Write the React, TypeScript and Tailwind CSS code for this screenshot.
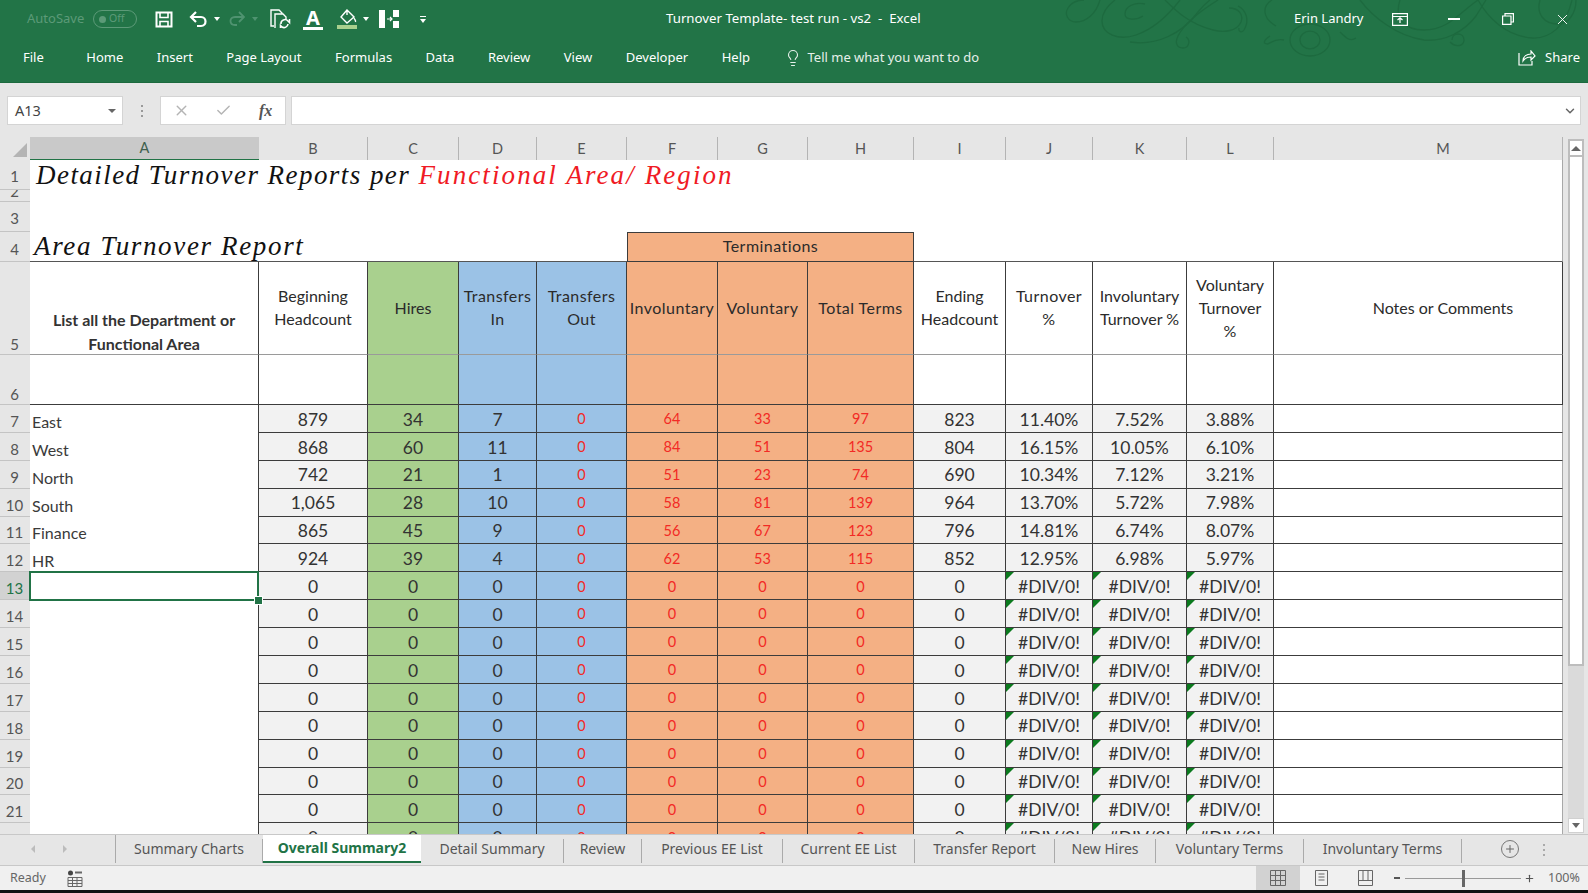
import { ChevronDown, Lightbulb, Plus, X, Check } from "lucide-react";

const cols = "grid grid-cols-[30px_229px_109px_91px_78px_90px_91px_90px_106px_92px_87px_94px_87px_289px]";
const sans = "[font-family:'Lato',sans-serif]";
const ui = "[font-family:'Noto_Sans',sans-serif]";
const script = "[font-family:'Liberation_Serif',serif] italic text-[27px] leading-none";
const line = "border-r border-b border-[#3c3c3c]";
const headerLine = "border-r border-b border-r-[#3c3c3c] border-b-[#9a9a9a]";

const colHeaders = ["A", "B", "C", "D", "E", "F", "G", "H", "I", "J", "K", "L", "M"];

const data = [
    ["7", "East", "879", "34", "7", "0", "64", "33", "97", "823", "11.40%", "7.52%", "3.88%"],
    ["8", "West", "868", "60", "11", "0", "84", "51", "135", "804", "16.15%", "10.05%", "6.10%"],
    ["9", "North", "742", "21", "1", "0", "51", "23", "74", "690", "10.34%", "7.12%", "3.21%"],
    ["10", "South", "1,065", "28", "10", "0", "58", "81", "139", "964", "13.70%", "5.72%", "7.98%"],
    ["11", "Finance", "865", "45", "9", "0", "56", "67", "123", "796", "14.81%", "6.74%", "8.07%"],
    ["12", "HR", "924", "39", "4", "0", "62", "53", "115", "852", "12.95%", "6.98%", "5.97%"],
];

const emptyRows = ["13", "14", "15", "16", "17", "18", "19", "20", "21", "22"];

const tabs = [
    { label: "Summary Charts", w: "w-[147px]" },
    { label: "Overall Summary2", w: "w-[158px]", active: true },
    { label: "Detail Summary", w: "w-[143px]" },
    { label: "Review", w: "w-[78px]" },
    { label: "Previous EE List", w: "w-[141px]" },
    { label: "Current EE List", w: "w-[132px]" },
    { label: "Transfer Report", w: "w-[140px]" },
    { label: "New Hires", w: "w-[101px]" },
    { label: "Voluntary Terms", w: "w-[148px]" },
    { label: "Involuntary Terms", w: "w-[158px]" },
];

function RowNum({ n, active, pad = "pb-[1px]" }: { n: string; active?: boolean; pad?: string }) {
    return (
        <div
            className={`flex items-end justify-center overflow-hidden border-b border-[#c4c4c4] pr-[1px] text-[15px] leading-[20px] ${pad} ${
                active ? "bg-[#d2d2d2] text-[#217346]" : "bg-[#e6e6e6] text-[#555]"
            }`}
        >
            {n}
        </div>
    );
}

function Num({ v, bg, red, error }: { v: string; bg: string; red?: boolean; error?: boolean }) {
    return (
        <div
            className={`relative flex items-center justify-center pt-[2px] leading-none ${line} ${bg} ${
                red ? "text-[14.5px] text-[#f22a25]" : "text-[17.5px] text-[#333]"
            }`}
        >
            {error && (
                <span className="absolute left-0 top-0 h-0 w-0 border-r-[8px] border-t-[8px] border-r-transparent border-t-[#0b7a1e]" />
            )}
            {v}
        </div>
    );
}

function DataRow({ cells, selected }: { cells: string[]; selected?: boolean }) {
    const error = cells[10] === "#DIV/0!";
    return (
        <div className={`${cols} h-[27.9px]`}>
            <RowNum n={cells[0]} active={selected} />
            <div className="relative flex items-end border-r border-[#3c3c3c] bg-white pb-[1px] pl-[2px] text-[16px] leading-[21px] text-[#3a3a3a]">
                {cells[1]}
                {selected && (
                    <div className="absolute -inset-x-[1px] -inset-y-[1px] z-10 border-2 border-[#217346]">
                        <span className="absolute -bottom-[5px] -right-[5px] h-[7px] w-[7px] bg-[#217346] outline outline-1 outline-white" />
                    </div>
                )}
            </div>
            <Num v={cells[2]} bg="bg-[#f2f2f2]" />
            <Num v={cells[3]} bg="bg-[#a9d08e]" />
            <Num v={cells[4]} bg="bg-[#9bc2e6]" />
            <Num v={cells[5]} bg="bg-[#9bc2e6]" red />
            <Num v={cells[6]} bg="bg-[#f4b084]" red />
            <Num v={cells[7]} bg="bg-[#f4b084]" red />
            <Num v={cells[8]} bg="bg-[#f4b084]" red />
            <Num v={cells[9]} bg="bg-[#f2f2f2]" />
            <Num v={cells[10]} bg="bg-[#f2f2f2]" error={error} />
            <Num v={cells[11]} bg="bg-[#f2f2f2]" error={error} />
            <Num v={cells[12]} bg="bg-[#f2f2f2]" error={error} />
            <div className="border-b border-r border-b-[#3c3c3c] border-r-[#a8a8a8] bg-white" />
        </div>
    );
}

function HeadCell({ bg, wide, children }: { bg: string; wide?: boolean; children?: React.ReactNode }) {
    return (
        <div
            className={`flex items-center justify-center pb-[2px] text-center text-[16px] leading-[23px] text-[#2b2b2b] ${headerLine} ${bg} ${
                wide ? "tracking-[0.45px]" : ""
            }`}
        >
            <div>{children}</div>
        </div>
    );
}

function BlankCell({ bg }: { bg: string }) {
    return <div className={`${line} ${bg}`} />;
}

function Swirls() {
    return (
        <svg className="pointer-events-none absolute right-0 top-0" width="540" height="70" viewBox="1048 0 540 70" fill="none" stroke="#1d6a3f" strokeWidth="1.3">
            <path d="M1100 0c-4 14-14 22-24 22-8 0-12-8-8-14 3-5 9-8 16-8" />
            <path d="M1115 0c-8 6-13 14-13 21 0 13 16 20 34 14 20-7 34-22 44-35" />
            <path d="M1145 4c-10-2-20 2-20 10 0 7 12 6 18 2" />
            <path d="M1130 42c26 4 52-8 68-30 4-5 8-9 12-12" />
            <path d="M1165 0c10 10 24 24 48 30 12 3 24 1 28-8 3-8-3-14-12-14" />
            <path d="M1218 0c-16 10-34 24-40 36-4 8 0 12 5 12 6 0 8-8 3-11" />
            <path d="M1238 6c8 4 12 14 6 24-2 3-6 2-5-2" />
            <path d="M1272 0c-10 6-10 18 4 26" />
            <path d="M1270 36c-6 4-8 8-2 8 4-2 8-6 16-4" />
            <path d="M1290 40a20 16 0 1 0 40 0a20 16 0 1 0-40 0" />
            <path d="M1300 40a9 8 0 1 0 20 0a9 8 0 1 0-20 0" />
            <path d="M1340 32c6 6 10 10 16 6" />
            <path d="M1360 0c12 16 36 36 64 40 20 2 40-8 52-24l10-16" />
            <path d="M1400 0c-6 18 4 30 24 30 24 0 34-16 54-30" />
            <path d="M1450 42c6 6 14 4 14-2 0-8-12-8-12 0" />
            <path d="M1478 0c10 18 28 36 54 38 18 1 34-12 40-38" />
            <path d="M1540 0c-4 14 4 24 18 24 10 0 18-10 18-24" />
        </svg>
    );
}

function QuickAccess() {
    return (
        <div className="flex w-[666px] items-center pl-[27px]">
            <span className="w-[66px] text-[13px] text-[#5c9a78]">AutoSave</span>
            <span className="flex h-[18px] w-[44px] items-center gap-[3px] rounded-full border border-[#5c9a78] pl-[5px] text-[10.5px] text-[#5c9a78]">
                <span className="h-[7px] w-[7px] rounded-full bg-[#5c9a78]" />
                Off
            </span>
            <svg className="ml-[18px]" width="18" height="17" viewBox="0 0 18 17" fill="none" stroke="white" strokeWidth="2">
                <path d="M1.5 1.5h15v14h-15z" />
                <path d="M5 1.5v5h8v-5M5 15.5v-5h8v5" strokeWidth="1.6" />
            </svg>
            <svg className="ml-[16px]" width="19" height="17" viewBox="0 0 19 17" fill="none" stroke="white" strokeWidth="2.2">
                <path d="M7 1 2 6l5 5" />
                <path d="M2.5 6H12c6 0 6 9 0 9H8" />
            </svg>
            <span className="ml-[6px] h-0 w-0 border-x-[3.5px] border-t-[4px] border-x-transparent border-t-white" />
            <svg className="ml-[8px]" width="17" height="16" viewBox="0 0 17 16" fill="none" stroke="#4f9370" strokeWidth="1.8">
                <path d="M11 1l5 5-5 5" />
                <path d="M15 6H7c-6 0-6 8 0 8h2" />
            </svg>
            <span className="ml-[7px] h-0 w-0 border-x-[3.5px] border-t-[4px] border-x-transparent border-t-[#4f9370]" />
            <svg className="ml-[12px]" width="21" height="20" viewBox="0 0 21 20" fill="none" stroke="white" strokeWidth="1.4">
                <path d="M4 17H1V1h8l3 3v1" />
                <path d="M5 19V5h8l3 3v2" />
                <path d="M11 15a4 4 0 0 1 7-3l1.500 1.500V10M18 15a4 4 0 0 1-6 3l-1.500-1.500V19" strokeWidth="1.600" />
            </svg>
            <span className="ml-[12px] flex w-[20px] flex-col items-center border-b-[3px] border-white text-[20px] font-bold leading-[19px] text-white">A</span>
            <span className="relative ml-[14px] flex h-[20px] w-[20px] flex-col items-center justify-start">
                <svg width="19" height="15" viewBox="0 0 19 15" fill="none" stroke="white" strokeWidth="1.400">
                    <path d="M9 1 3 8l6 6 7-6zM9 1v5" />
                    <path d="M16 9c1 2 2 3 1.500 4" />
                </svg>
                <span className="mt-[1px] h-[4px] w-[20px] bg-[#a9d08e]" />
            </span>
            <span className="ml-[6px] h-0 w-0 border-x-[3.5px] border-t-[4px] border-x-transparent border-t-white" />
            <svg className="ml-[10px]" width="20" height="18" viewBox="0 0 20 18" fill="white">
                <path d="M0 0h6v18H0zM14 0h6v7h-6zM14 11h6v7h-6z" />
                <path d="M8 9h5M11 7l2 2-2 2" stroke="white" fill="none" strokeWidth="1.200" />
            </svg>
            <span className="ml-[21px] flex flex-col items-center gap-[2px]">
                <span className="h-[1px] w-[6px] bg-white" />
                <span className="h-0 w-0 border-x-[3.5px] border-t-[4px] border-x-transparent border-t-white" />
            </span>
        </div>
    );
}

function WindowControls() {
    return (
        <div className="flex flex-1 items-center">
            <span className="w-[98px] text-[13px] text-white">Erin Landry</span>
            <svg width="16" height="13" viewBox="0 0 16 13" fill="none" stroke="white" strokeWidth="1.200">
                <path d="M.6.6h14.800v11.800H.6zM.6 3.500h14.800M8 10V5M5.500 7 8 4.800 10.500 7" />
            </svg>
            <span className="ml-[40px] h-[1.5px] w-[12px] bg-white" />
            <svg className="ml-[42px]" width="12" height="12" viewBox="0 0 12 12" fill="none" stroke="white" strokeWidth="1.200">
                <path d="M.6 3h8.400v8.400H.6zM3 3V.6h8.400V9H9" />
            </svg>
            <X className="ml-[40px] text-white" size={17} strokeWidth={1.3} />
        </div>
    );
}

function Ribbon() {
    return (
        <div className={`relative h-[83px] flex-none overflow-hidden border-b border-[#1c6a3e] bg-[#227447] ${ui}`}>
            <Swirls />
            <div className="relative flex h-[37px] items-center pt-[1px]">
                <QuickAccess />
                <div className="w-[628px] text-[13.25px] text-white">Turnover Template- test run - vs2&nbsp; -&nbsp; Excel</div>
                <WindowControls />
            </div>
            <div className="relative flex h-[42px] items-center gap-[33.5px] pl-[23px] text-[13px] text-white">
                <span className="mr-[9px]">File</span>
                <span>Home</span>
                <span>Insert</span>
                <span>Page Layout</span>
                <span>Formulas</span>
                <span>Data</span>
                <span>Review</span>
                <span>View</span>
                <span>Developer</span>
                <span>Help</span>
                <span className="flex items-center gap-[6px] text-[#e6f0ea]">
                    <Lightbulb size={18} strokeWidth={1.5} />
                    Tell me what you want to do
                </span>
                <span className="ml-auto flex items-center gap-[9px] pr-[8px]">
                    <svg width="18" height="16" viewBox="0 0 18 16" fill="none" stroke="white" strokeWidth="1.200">
                        <path d="M1 3v12h13v-4" />
                        <path d="M5 11c0-5 4-7 8-7V1l4 5-4 4V7c-3 0-6 1-8 4z" />
                    </svg>
                    Share
                </span>
            </div>
        </div>
    );
}

function FormulaBar() {
    return (
        <div className={`flex h-[54px] flex-none items-start gap-0 bg-[#e6e6e6] pt-[13px] ${ui}`}>
            <div className="ml-[7px] flex h-[29px] w-[116px] items-center justify-between border border-[#d4d4d4] bg-white pl-[7px] pr-[6px] text-[14.5px] text-[#444]">
                A13
                <span className="h-0 w-0 border-x-[4px] border-t-[4px] border-x-transparent border-t-[#666]" />
            </div>
            <div className="flex h-[29px] w-[37px] flex-col items-center justify-center gap-[3px]">
                <span className="h-[2px] w-[2px] bg-[#999]" />
                <span className="h-[2px] w-[2px] bg-[#999]" />
                <span className="h-[2px] w-[2px] bg-[#999]" />
            </div>
            <div className="flex h-[29px] w-[126px] items-center border border-[#d4d4d4] bg-white pl-[12px] text-[#b4b4b4]">
                <X size={17} strokeWidth={2} />
                <Check className="ml-[25px]" size={17} strokeWidth={2} />
                <span className="ml-[27px] [font-family:'Liberation_Serif',serif] text-[16px] font-bold italic text-[#555]">fx</span>
            </div>
            <div className="ml-[5px] flex h-[29px] w-[1290px] items-center justify-end border border-[#d4d4d4] bg-white pr-[3px] text-[#666]">
                <ChevronDown size={14} strokeWidth={2.5} />
            </div>
        </div>
    );
}

function Sheet() {
    return (
        <div className={`relative w-[1563px] overflow-hidden ${sans}`}>
            <div className={`${cols} h-[23px] bg-[#e6e6e6] text-[14.5px] text-[#555]`}>
                <div className="flex items-end justify-end pb-[4px] pr-[3px]">
                    <span className="h-0 w-0 border-b-[14px] border-l-[14px] border-b-[#b4b4b4] border-l-transparent" />
                </div>
                {colHeaders.map((c, i) => (
                    <div
                        key={c}
                        className={`flex items-center justify-center ${
                            i === 0
                                ? "border-b-2 border-[#217346] bg-[#c9c9c9] text-[#3f5f4e]"
                                : "border-b border-r border-b-[#a8a8a8] border-r-[#b4b4b4]"
                        } ${c === "M" ? "pl-[50px]" : ""}`}
                    >
                        {c}
                    </div>
                ))}
            </div>

            <div className={`${cols} h-[30px]`}>
                <RowNum n="1" pad="pb-[3px]" />
                <div className={`col-span-13 flex items-center overflow-hidden border-r border-[#a8a8a8] bg-white pl-[6px] whitespace-pre tracking-[1.45px] text-[#111] ${script}`}>
                    Detailed Turnover Reports per <span className="tracking-[2.1px] text-[#f01a24]">Functional Area/ Region</span>
                </div>
            </div>
            <div className={`${cols} h-[12px]`}>
                <RowNum n="2" pad="pb-0" />
                <div className="col-span-13 border-r border-[#a8a8a8] bg-white" />
            </div>
            <div className={`${cols} h-[30px]`}>
                <RowNum n="3" pad="pb-[3px]" />
                <div className="col-span-13 border-r border-[#a8a8a8] bg-white" />
            </div>
            <div className={`${cols} h-[30px]`}>
                <RowNum n="4" pad="pb-[2px]" />
                <div className={`col-span-5 flex items-center overflow-hidden border-b border-[#555] bg-white pl-[4px] tracking-[1.65px] text-[#111] ${script}`}>
                    Area Turnover Report
                </div>
                <div className="col-span-3 flex items-center justify-center border-x border-b border-t border-[#3c3c3c] bg-[#f4b084] pb-[3px] text-[16px] leading-none tracking-[0.45px] text-[#2b2b2b]">
                    Terminations
                </div>
                <div className="col-span-5 border-b border-r border-b-[#555] border-r-[#a8a8a8] bg-white" />
            </div>

            <div className={`${cols} h-[93px]`}>
                <RowNum n="5" pad="pb-0" />
                <div className={`flex items-end justify-center text-center text-[16px] font-bold leading-[23.5px] text-[#333] ${headerLine} bg-white`}>
                    <div className="translate-y-[1px]">
                        List all the Department or
                        <br />
                        Functional Area
                    </div>
                </div>
                <HeadCell bg="bg-white">Beginning<br />Headcount</HeadCell>
                <HeadCell bg="bg-[#a9d08e]">Hires</HeadCell>
                <HeadCell bg="bg-[#9bc2e6]" wide>Transfers<br />In</HeadCell>
                <HeadCell bg="bg-[#9bc2e6]" wide>Transfers<br />Out</HeadCell>
                <HeadCell bg="bg-[#f4b084]" wide>Involuntary</HeadCell>
                <HeadCell bg="bg-[#f4b084]" wide>Voluntary</HeadCell>
                <HeadCell bg="bg-[#f4b084]" wide>Total Terms</HeadCell>
                <HeadCell bg="bg-white">Ending<br />Headcount</HeadCell>
                <HeadCell bg="bg-white" wide>Turnover<br />%</HeadCell>
                <HeadCell bg="bg-white">Involuntary<br />Turnover %</HeadCell>
                <HeadCell bg="bg-white">Voluntary<br />Turnover<br />%</HeadCell>
                <HeadCell bg="bg-white pl-[50px]">Notes or Comments</HeadCell>
            </div>

            <div className={`${cols} h-[50px]`}>
                <RowNum n="6" pad="pb-0" />
                <BlankCell bg="bg-white" />
                <BlankCell bg="bg-white" />
                <BlankCell bg="bg-[#a9d08e]" />
                <BlankCell bg="bg-[#9bc2e6]" />
                <BlankCell bg="bg-[#9bc2e6]" />
                <BlankCell bg="bg-[#f4b084]" />
                <BlankCell bg="bg-[#f4b084]" />
                <BlankCell bg="bg-[#f4b084]" />
                <BlankCell bg="bg-white" />
                <BlankCell bg="bg-white" />
                <BlankCell bg="bg-white" />
                <BlankCell bg="bg-white" />
                <BlankCell bg="bg-white" />
            </div>

            {data.map((cells) => (
                <DataRow key={cells[0]} cells={cells} />
            ))}
            {emptyRows.map((n) => (
                <DataRow
                    key={n}
                    selected={n === "13"}
                    cells={[n, "", "0", "0", "0", "0", "0", "0", "0", "0", "#DIV/0!", "#DIV/0!", "#DIV/0!"]}
                />
            ))}
        </div>
    );
}

function ScrollBar() {
    return (
        <div className="flex w-[25px] flex-col pl-[5px] pr-[4px] pt-[2px]">
            <div className="flex h-[18px] flex-none items-center justify-center border-2 border-[#bdbdbd] bg-white">
                <span className="h-0 w-0 border-x-[5px] border-b-[5px] border-x-transparent border-b-[#666]" />
            </div>
            <div className="h-[509px] flex-none border-x-2 border-b-2 border-[#bdbdbd] bg-white" />
            <div className="h-[152px] flex-none bg-[#dadada]" />
            <div className="flex h-[15px] flex-none items-center justify-center border border-[#d0d0d0] bg-white">
                <span className="h-0 w-0 border-x-[4px] border-t-[5px] border-x-transparent border-t-[#666]" />
            </div>
        </div>
    );
}

function TabBar() {
    return (
        <div className={`relative z-20 flex h-[32px] flex-none items-start border-y border-[#c8c8c8] bg-[#e6e6e6] text-[14px] leading-none text-[#555] ${ui}`}>
            <div className="flex h-[28px] w-[116px] flex-none items-center gap-[28px] border-r border-[#aaa] pl-[31px] text-[#bbb]">
                <span className="h-0 w-0 border-y-[4px] border-r-[4px] border-y-transparent border-r-[#bcbcbc]" />
                <span className="h-0 w-0 border-y-[4px] border-l-[4px] border-y-transparent border-l-[#bcbcbc]" />
            </div>
            {tabs.map((t) => (
                <div
                    key={t.label}
                    className={`flex flex-none items-center justify-center ${t.w} ${
                        t.active
                            ? "h-[28px] border-b-2 border-[#217346] bg-white font-bold text-[#217346]"
                            : "mt-[4px] h-[24px] border-r border-[#aaa] pb-[4px]"
                    }`}
                >
                    {t.label}
                </div>
            ))}
            <div className="ml-[39px] mt-[5px] flex h-[18px] w-[18px] items-center justify-center rounded-full border-[1.5px] border-[#777] text-[#666]">
                <Plus size={12} strokeWidth={2} />
            </div>
            <div className="ml-[24px] mt-[9px] flex flex-col gap-[3px]">
                <span className="h-[2px] w-[2px] bg-[#aaa]" />
                <span className="h-[2px] w-[2px] bg-[#aaa]" />
                <span className="h-[2px] w-[2px] bg-[#aaa]" />
            </div>
        </div>
    );
}

function StatusBar() {
    return (
        <div className={`flex h-[24px] flex-none items-center bg-[#f0f0f0] text-[12.5px] text-[#666] ${ui}`}>
            <span className="ml-[10px] w-[57px]">Ready</span>
            <svg width="16" height="17" viewBox="0 0 16 17" fill="none" stroke="#666" strokeWidth="1">
                <circle cx="3.500" cy="3" r="2.500" fill="#444" stroke="none" />
                <path d="M8 2.500h7" strokeWidth="2" />
                <path d="M1 7.500h14v9H1zM1 10.500h14M1 13.500h14M5.500 7.500v9M10 7.500v9" />
            </svg>
            <div className="ml-[1173px] flex h-[24px] w-[44px] items-center justify-center bg-[#d2d2d2]">
                <svg width="16" height="16" viewBox="0 0 16 16" fill="none" stroke="#666" strokeWidth="1">
                    <path d="M.5.5h15v15H.5zM.5 5.500h15M.5 10.500h15M5.500.5v15M10.500.5v15" />
                </svg>
            </div>
            <svg className="ml-[15px]" width="13" height="16" viewBox="0 0 13 16" fill="none" stroke="#666" strokeWidth="1">
                <path d="M.5.5h12v15H.5zM3.500 4h6M3.500 7h6M3.500 10h6" />
            </svg>
            <svg className="ml-[30px]" width="15" height="16" viewBox="0 0 15 16" fill="none" stroke="#666" strokeWidth="1">
                <path d="M.5.5h14v15H.5zM.5 10.500h14M5 .5v10M10 .5v10" />
            </svg>
            <span className="ml-[21px] h-[2px] w-[6px] bg-[#555]" />
            <div className="relative ml-[5px] h-[1px] w-[116px] bg-[#999]">
                <span className="absolute -top-[8px] left-[57px] h-[17px] w-[3px] bg-[#666]" />
            </div>
            <Plus className="ml-[3px] text-[#555]" size={11} strokeWidth={2.5} />
            <span className="ml-[13px] text-[12.5px]">100%</span>
        </div>
    );
}

export default function App() {
    return (
        <div className="flex h-[893px] w-[1588px] flex-col overflow-hidden bg-[#e6e6e6]">
            <Ribbon />
            <FormulaBar />
            <div className="flex h-[697px] flex-none overflow-hidden bg-[#e6e6e6]">
                <Sheet />
                <ScrollBar />
            </div>
            <TabBar />
            <StatusBar />
            <div className="h-[3px] flex-none bg-[#111]" />
        </div>
    );
}
